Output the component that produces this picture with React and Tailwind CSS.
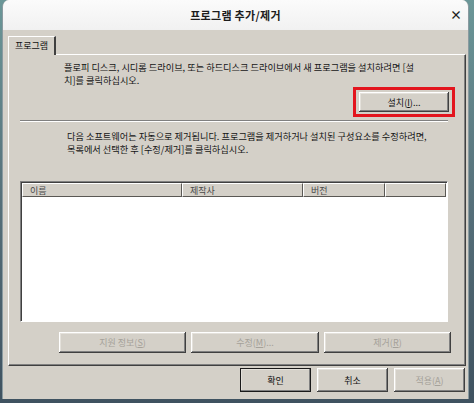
import React from 'react';

const font = { fontFamily: '"Noto Sans CJK KR", "Noto Sans", sans-serif' };

// classic raised 3D bevel
const raised =
  'shadow-[inset_-1px_-1px_#404040,inset_1px_1px_#ffffff,inset_-2px_-2px_#808080,inset_2px_2px_#e4e1db]';

const Mn = ({ children }) => <span className="underline underline-offset-1">{children}</span>;

const Btn = ({ children, disabled, isDefault, className = '' }) => (
  <button
    className={`flex items-center justify-center bg-[#d4d0c8] text-[9px] leading-none ${raised} ${
      isDefault ? 'outline outline-1 outline-[#1a1a1a] -outline-offset-1' : ''
    } ${disabled ? 'text-[#a5a199]' : 'text-[#111]'} ${className}`}
  >
    {children}
  </button>
);

function ListHeader() {
  const cols = [
    { label: '이름', w: 'w-[160px]' },
    { label: '제작사', w: 'w-[121px]' },
    { label: '버전', w: 'w-[82px]' },
    { label: '', w: 'flex-1' },
  ];
  return (
    <div className="flex h-[14px] bg-[#d4d0c8]">
      {cols.map((c, i) => (
        <div
          key={i}
          className={`${c.w} h-full pl-[7px] text-[9px] leading-[13px] text-[#4a4a4a] border-t border-l border-white border-b border-b-[#5a5854] border-r border-r-[#5a5854]`}
        >
          {c.label}
        </div>
      ))}
    </div>
  );
}

export default function App() {
  return (
    <div
      className="w-[474px] h-[403px] bg-gradient-to-b from-[#6b9798] via-[#56707a] to-[#3f5260] pl-[2px] overflow-hidden"
      style={font}
    >
      <div className="w-[467px] h-[399px] rounded-t-[7px] overflow-hidden flex flex-col bg-[#d4d0c8] border-l border-r border-[#8a9aa0]">
        {/* title bar */}
        <div className="h-[30px] bg-gradient-to-b from-[#fbfbfb] to-[#f1f1f1] flex items-center relative">
          <div className="flex-1 text-center text-[11px] font-bold text-[#1c1c1c] tracking-[0.3px]">
            프로그램 추가/제거
          </div>
          <div className="absolute right-[6px] top-[9px] text-[12px] font-bold leading-none text-[#222]">
            ×
          </div>
        </div>

        {/* body */}
        <div className="flex-1 pl-[5px] pr-[2px] pt-[6px] flex flex-col">
          {/* tab */}
          <div className="flex">
            <div className="w-[48px] h-[19px] border-t border-l border-white border-r-2 border-r-[#404040] flex items-center justify-center text-[9px] text-[#111] bg-[#d4d0c8] relative z-10 -mb-px">
              프로그램
            </div>
          </div>

          {/* tab panel */}
          <div className="h-[312px] border-t border-l border-white border-r border-b border-r-[#404040] border-b-[#404040] shadow-[inset_-1px_-1px_#808080] flex flex-col">
            <p className="pl-[55px] pt-[6px] text-[9.2px] leading-[13px] text-[#151515] whitespace-nowrap">
              플로피 디스크, 시디롬 드라이브, 또는 하드디스크 드라이브에서 새 프로그램을 설치하려면 [설
              <br />
              치]를 클릭하십시오.
            </p>

            <div className="flex justify-end pr-[10px]">
              <div className="border-[3px] border-[#e3151e] px-[3px] py-[2px]">
                <Btn className="w-[90px] h-[20px]">
                  설치(<Mn>I</Mn>)...
                </Btn>
              </div>
            </div>

            <div className="mt-[3px] ml-[11px] mr-[17px] h-[2px] border-t border-[#808080] border-b border-b-white" />

            <p className="pl-[58px] pt-[8px] text-[9.2px] leading-[13px] text-[#151515] whitespace-nowrap">
              다음 소프트웨어는 자동으로 제거됩니다. 프로그램을 제거하거나 설치된 구성요소를 수정하려면,
              <br />
              목록에서 선택한 후 [수정/제거]를 클릭하십시오.
            </p>

            {/* list view */}
            <div className="mt-[25px] ml-[11px] mr-[17px] h-[141px] border-t border-l border-[#808080] border-b border-r border-b-white border-r-white shadow-[inset_1px_1px_#404040] p-[1px] flex flex-col bg-white">
              <ListHeader />
              <div className="flex-1 bg-white" />
            </div>

            <div className="mt-[10px] ml-[50px] flex gap-[5px]">
              <Btn disabled className="w-[127px] h-[21px]">
                지원 정보(<Mn>S</Mn>)
              </Btn>
              <Btn disabled className="w-[128px] h-[21px]">
                수정(<Mn>M</Mn>)...
              </Btn>
              <Btn disabled className="w-[127px] h-[21px]">
                제거(<Mn>R</Mn>)
              </Btn>
            </div>
          </div>

          {/* dialog buttons */}
          <div className="mt-[2px] flex justify-end gap-[6px] pr-[1px]">
            <Btn isDefault className="w-[71px] h-[24px]">
              확인
            </Btn>
            <Btn className="w-[71px] h-[24px]">취소</Btn>
            <Btn disabled className="w-[71px] h-[24px]">
              적용(<Mn>A</Mn>)
            </Btn>
          </div>
        </div>
      </div>
    </div>
  );
}
